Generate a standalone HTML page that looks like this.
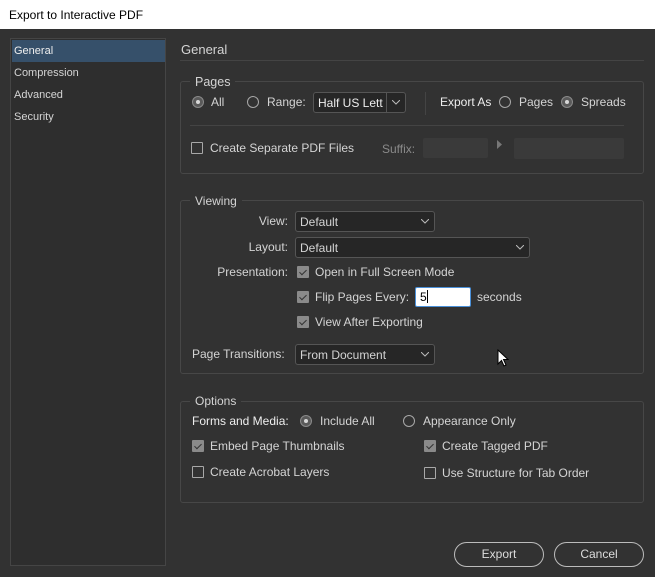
<!DOCTYPE html>
<html><head><style>
*{margin:0;padding:0;box-sizing:border-box}
body{width:655px;height:577px;background:#323232;font-family:"Liberation Sans",sans-serif;font-size:12px;color:#d4d4d4;position:relative;overflow:hidden}
.a{position:absolute;white-space:nowrap;line-height:14px}
.title{position:absolute;left:0;top:0;width:655px;height:29px;background:#fff;color:#000;font-size:12px;padding:8px 9px}
.side{position:absolute;left:10px;top:38px;width:156px;height:528px;border:1px solid #454545;background:#2e2e2e}
.sel{position:absolute;left:1px;top:1px;width:153px;height:22px;background:#36506a}
.box{position:absolute;border:1px solid #474747;border-radius:3px}
.leg{position:absolute;background:#323232;padding:0 5px;line-height:14px}
.rad{position:absolute;width:12px;height:12px;border:1px solid #a8a8a8;border-radius:50%}
.rad.on{background:#5a5a5a;border-color:#8a8a8a}
.rad.on:after{content:"";position:absolute;left:3px;top:3px;width:4px;height:4px;border-radius:50%;background:#d8d8d8}
.cb{position:absolute;width:12px;height:12px;border:1px solid #a8a8a8;border-radius:1px}
.cb.on{background:#8a8a8a;border-color:#8a8a8a}
.cb.on:after{content:"";position:absolute;left:3px;top:1px;width:3px;height:6px;border:solid #333;border-width:0 1.5px 1.5px 0;transform:rotate(45deg)}
.selb{position:absolute;height:21px;border:1px solid #555;border-radius:3px;background:#262626;padding:3px 4px;line-height:14px}
.selb svg{position:absolute;right:5px;top:7px}
.inp{position:absolute;background:#3a3a3a;border-radius:2px}
.btn{position:absolute;height:25px;border:1.5px solid #bcbcbc;border-radius:13px;text-align:center;line-height:22px;color:#ddd}
</style></head><body>
<div class="title">Export to Interactive PDF</div>
<div class="side"><div class="sel"></div></div>
<div class="a" style="left:14px;top:44px;color:#eee;font-size:11px">General</div>
<div class="a" style="left:14px;top:66px;font-size:11px">Compression</div>
<div class="a" style="left:14px;top:88px;font-size:11px">Advanced</div>
<div class="a" style="left:14px;top:110px;font-size:11px">Security</div>

<div class="a" style="left:181px;top:43px;font-size:13px">General</div>
<div style="position:absolute;left:180px;top:60px;width:464px;height:1px;background:#444"></div>

<div class="box" style="left:180px;top:81px;width:464px;height:93px"></div>
<div class="leg" style="left:190px;top:75px;font-size:12.5px">Pages</div>
<div class="rad on" style="left:192px;top:96px"></div><div class="a" style="left:211px;top:95px">All</div>
<div class="rad" style="left:247px;top:96px"></div><div class="a" style="left:267px;top:95px">Range:</div>
<div class="selb" style="left:313px;top:92px;width:93px;color:#eee">Half US Lett<div style="position:absolute;left:72px;top:0;width:1px;height:19px;background:#555"></div><svg width="8" height="5"><path d="M0 0L4 4L8 0" stroke="#bbb" fill="none"/></svg></div>
<div style="position:absolute;left:425px;top:92px;width:1px;height:23px;background:#444"></div>
<div class="a" style="left:440px;top:95px;color:#eee">Export As</div>
<div class="rad" style="left:499px;top:96px"></div><div class="a" style="left:519px;top:95px">Pages</div>
<div class="rad on" style="left:561px;top:96px"></div><div class="a" style="left:581px;top:95px">Spreads</div>
<div style="position:absolute;left:190px;top:125px;width:434px;height:1px;background:#444"></div>
<div class="cb" style="left:191px;top:142px"></div><div class="a" style="left:210px;top:141px">Create Separate PDF Files</div>
<div class="a" style="left:382px;top:142px;color:#8a8a8a">Suffix:</div>
<div class="inp" style="left:423px;top:138px;width:65px;height:20px"></div>
<svg class="a" style="left:497px;top:140px" width="5" height="9"><path d="M0 0L5 4.5L0 9Z" fill="#777"/></svg>
<div class="inp" style="left:514px;top:138px;width:110px;height:21px"></div>

<div class="box" style="left:180px;top:200px;width:464px;height:174px"></div>
<div class="leg" style="left:190px;top:194px">Viewing</div>
<div class="a" style="left:200px;top:214px;width:88px;text-align:right">View:</div>
<div class="selb" style="left:295px;top:211px;width:140px">Default<svg width="8" height="5"><path d="M0 0L4 4L8 0" stroke="#bbb" fill="none"/></svg></div>
<div class="a" style="left:200px;top:240px;width:88px;text-align:right">Layout:</div>
<div class="selb" style="left:295px;top:237px;width:235px">Default<svg width="8" height="5"><path d="M0 0L4 4L8 0" stroke="#bbb" fill="none"/></svg></div>
<div class="a" style="left:190px;top:265px;width:98px;text-align:right">Presentation:</div>
<div class="cb on" style="left:297px;top:266px"></div><div class="a" style="left:315px;top:265px">Open in Full Screen Mode</div>
<div class="cb on" style="left:297px;top:291px"></div><div class="a" style="left:315px;top:290px">Flip Pages Every:</div>
<div style="position:absolute;left:415px;top:287px;width:56px;height:20px;background:#fff;border:1px solid #4a90d9;border-radius:2px;color:#000;padding:2px 4px;line-height:14px">5<span style="display:inline-block;width:1px;height:13px;background:#000;vertical-align:-2px"></span></div>
<div class="a" style="left:477px;top:290px">seconds</div>
<div class="cb on" style="left:297px;top:316px"></div><div class="a" style="left:315px;top:315px">View After Exporting</div>
<div class="a" style="left:192px;top:347px">Page Transitions:</div>
<div class="selb" style="left:295px;top:344px;width:140px">From Document<svg width="8" height="5"><path d="M0 0L4 4L8 0" stroke="#bbb" fill="none"/></svg></div>
<svg class="a" style="left:497px;top:349px" width="12" height="19"><path d="M1 1L1 15L4.5 11.5L7 17L9 16L6.5 10.5L11 10.5Z" fill="#fff" stroke="#000" stroke-width="1"/></svg>

<div class="box" style="left:180px;top:401px;width:464px;height:102px"></div>
<div class="leg" style="left:190px;top:394px">Options</div>
<div class="a" style="left:192px;top:414px;color:#eee">Forms and Media:</div>
<div class="rad on" style="left:300px;top:415px"></div><div class="a" style="left:320px;top:414px">Include All</div>
<div class="rad" style="left:403px;top:415px"></div><div class="a" style="left:423px;top:414px">Appearance Only</div>
<div class="cb on" style="left:192px;top:440px"></div><div class="a" style="left:210px;top:439px">Embed Page Thumbnails</div>
<div class="cb on" style="left:424px;top:440px"></div><div class="a" style="left:442px;top:439px">Create Tagged PDF</div>
<div class="cb" style="left:192px;top:466px"></div><div class="a" style="left:210px;top:465px">Create Acrobat Layers</div>
<div class="cb" style="left:424px;top:467px"></div><div class="a" style="left:442px;top:466px">Use Structure for Tab Order</div>

<div class="btn" style="left:454px;top:542px;width:90px">Export</div>
<div class="btn" style="left:554px;top:542px;width:90px">Cancel</div>
</body></html>
